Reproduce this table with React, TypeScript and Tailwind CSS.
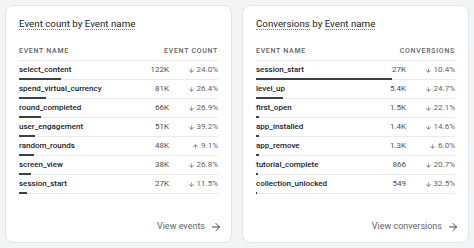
import { ArrowRight } from "lucide-react";

type Row = { name: string; value: string; pct: string; up?: boolean; bar: number };

const eventRows: Row[] = [
  { name: "select_content", value: "122K", pct: "24.0%", bar: 42 },
  { name: "spend_virtual_currency", value: "81K", pct: "26.4%", bar: 27 },
  { name: "round_completed", value: "66K", pct: "26.9%", bar: 22 },
  { name: "user_engagement", value: "51K", pct: "39.2%", bar: 16 },
  { name: "random_rounds", value: "48K", pct: "9.1%", up: true, bar: 15 },
  { name: "screen_view", value: "38K", pct: "26.8%", bar: 12 },
  { name: "session_start", value: "27K", pct: "11.5%", bar: 8 },
];

const conversionRows: Row[] = [
  { name: "session_start", value: "27K", pct: "10.4%", bar: 136 },
  { name: "level_up", value: "5.4K", pct: "24.7%", bar: 27 },
  { name: "first_open", value: "1.5K", pct: "22.1%", bar: 3 },
  { name: "app_installed", value: "1.4K", pct: "14.6%", bar: 3 },
  { name: "app_remove", value: "1.3K", pct: "6.0%", bar: 3 },
  { name: "tutorial_complete", value: "866", pct: "20.7%", bar: 2 },
  { name: "collection_unlocked", value: "549", pct: "32.5%", bar: 1 },
];

function Arrow({ up }: { up?: boolean }) {
  return (
    <svg
      viewBox="0 0 24 24"
      className={up ? "w-[7px] h-[7px] rotate-180" : "w-[7px] h-[7px]"}
      fill="currentColor"
    >
      <path d="M20 12l-1.41-1.41L13 16.17V4h-2v12.17l-5.58-5.59L4 12l8 8 8-8z" />
    </svg>
  );
}

function Card({
  metric,
  column,
  rows,
  link,
}: {
  metric: string;
  column: string;
  rows: Row[];
  link: string;
}) {
  return (
    <div className="flex-1 flex flex-col bg-white border border-[#e3e4e6] rounded-lg px-[13px] pt-[12px] pb-[7px]">
      {/* Title */}
      <div className="h-[14px] text-[9.75px] leading-[12px] text-[#202124]">
        <span className="border-b border-dotted border-[#80868b]">{metric}</span>
        <span> by </span>
        <span className="border-b border-dotted border-[#80868b]">Event name</span>
      </div>

      {/* Header */}
      <div className="mt-[11px] h-[18px] flex items-center border-b border-[#e8eaed] text-[7px] tracking-[0.1em] font-medium text-[#5f6368]">
        <span className="flex-1">EVENT NAME</span>
        <span>{column}</span>
      </div>

      {/* Rows */}
      {rows.map((r) => (
        <div
          key={r.name}
          className="relative h-[19px] flex items-center border-b border-[#e8eaed] text-[#202124]"
        >
          <span className="flex-1 text-[8px] font-medium">{r.name}</span>
          <span className="text-[8px] text-[#4a4d51]">{r.value}</span>
          <span className="w-[49px] flex items-center justify-end gap-[2px] text-[8px] text-[#5f6368]">
            <Arrow up={r.up} />
            {r.pct}
          </span>
          <div
            className="absolute left-0 bottom-[-1px] h-[2px] bg-[#3c4043]"
            style={{ width: r.bar }}
          />
        </div>
      ))}

      {/* Footer link */}
      <div className="mt-auto h-[16px] flex items-center justify-end gap-[5px] mr-[-4px] text-[9px] text-[#5f6368]">
        <span>{link}</span>
        <ArrowRight className="w-[12px] h-[12px] text-[#3c4043]" strokeWidth={2} />
      </div>
    </div>
  );
}

export default function App() {
  return (
    <div
      className="w-[474px] h-[248px] bg-[#f3f4f5] p-[5px] flex gap-[10px]"
      style={{ fontFamily: "Roboto, 'Noto Sans', sans-serif" }}
    >
      <Card metric="Event count" column="EVENT COUNT" rows={eventRows} link="View events" />
      <Card metric="Conversions" column="CONVERSIONS" rows={conversionRows} link="View conversions" />
    </div>
  );
}
